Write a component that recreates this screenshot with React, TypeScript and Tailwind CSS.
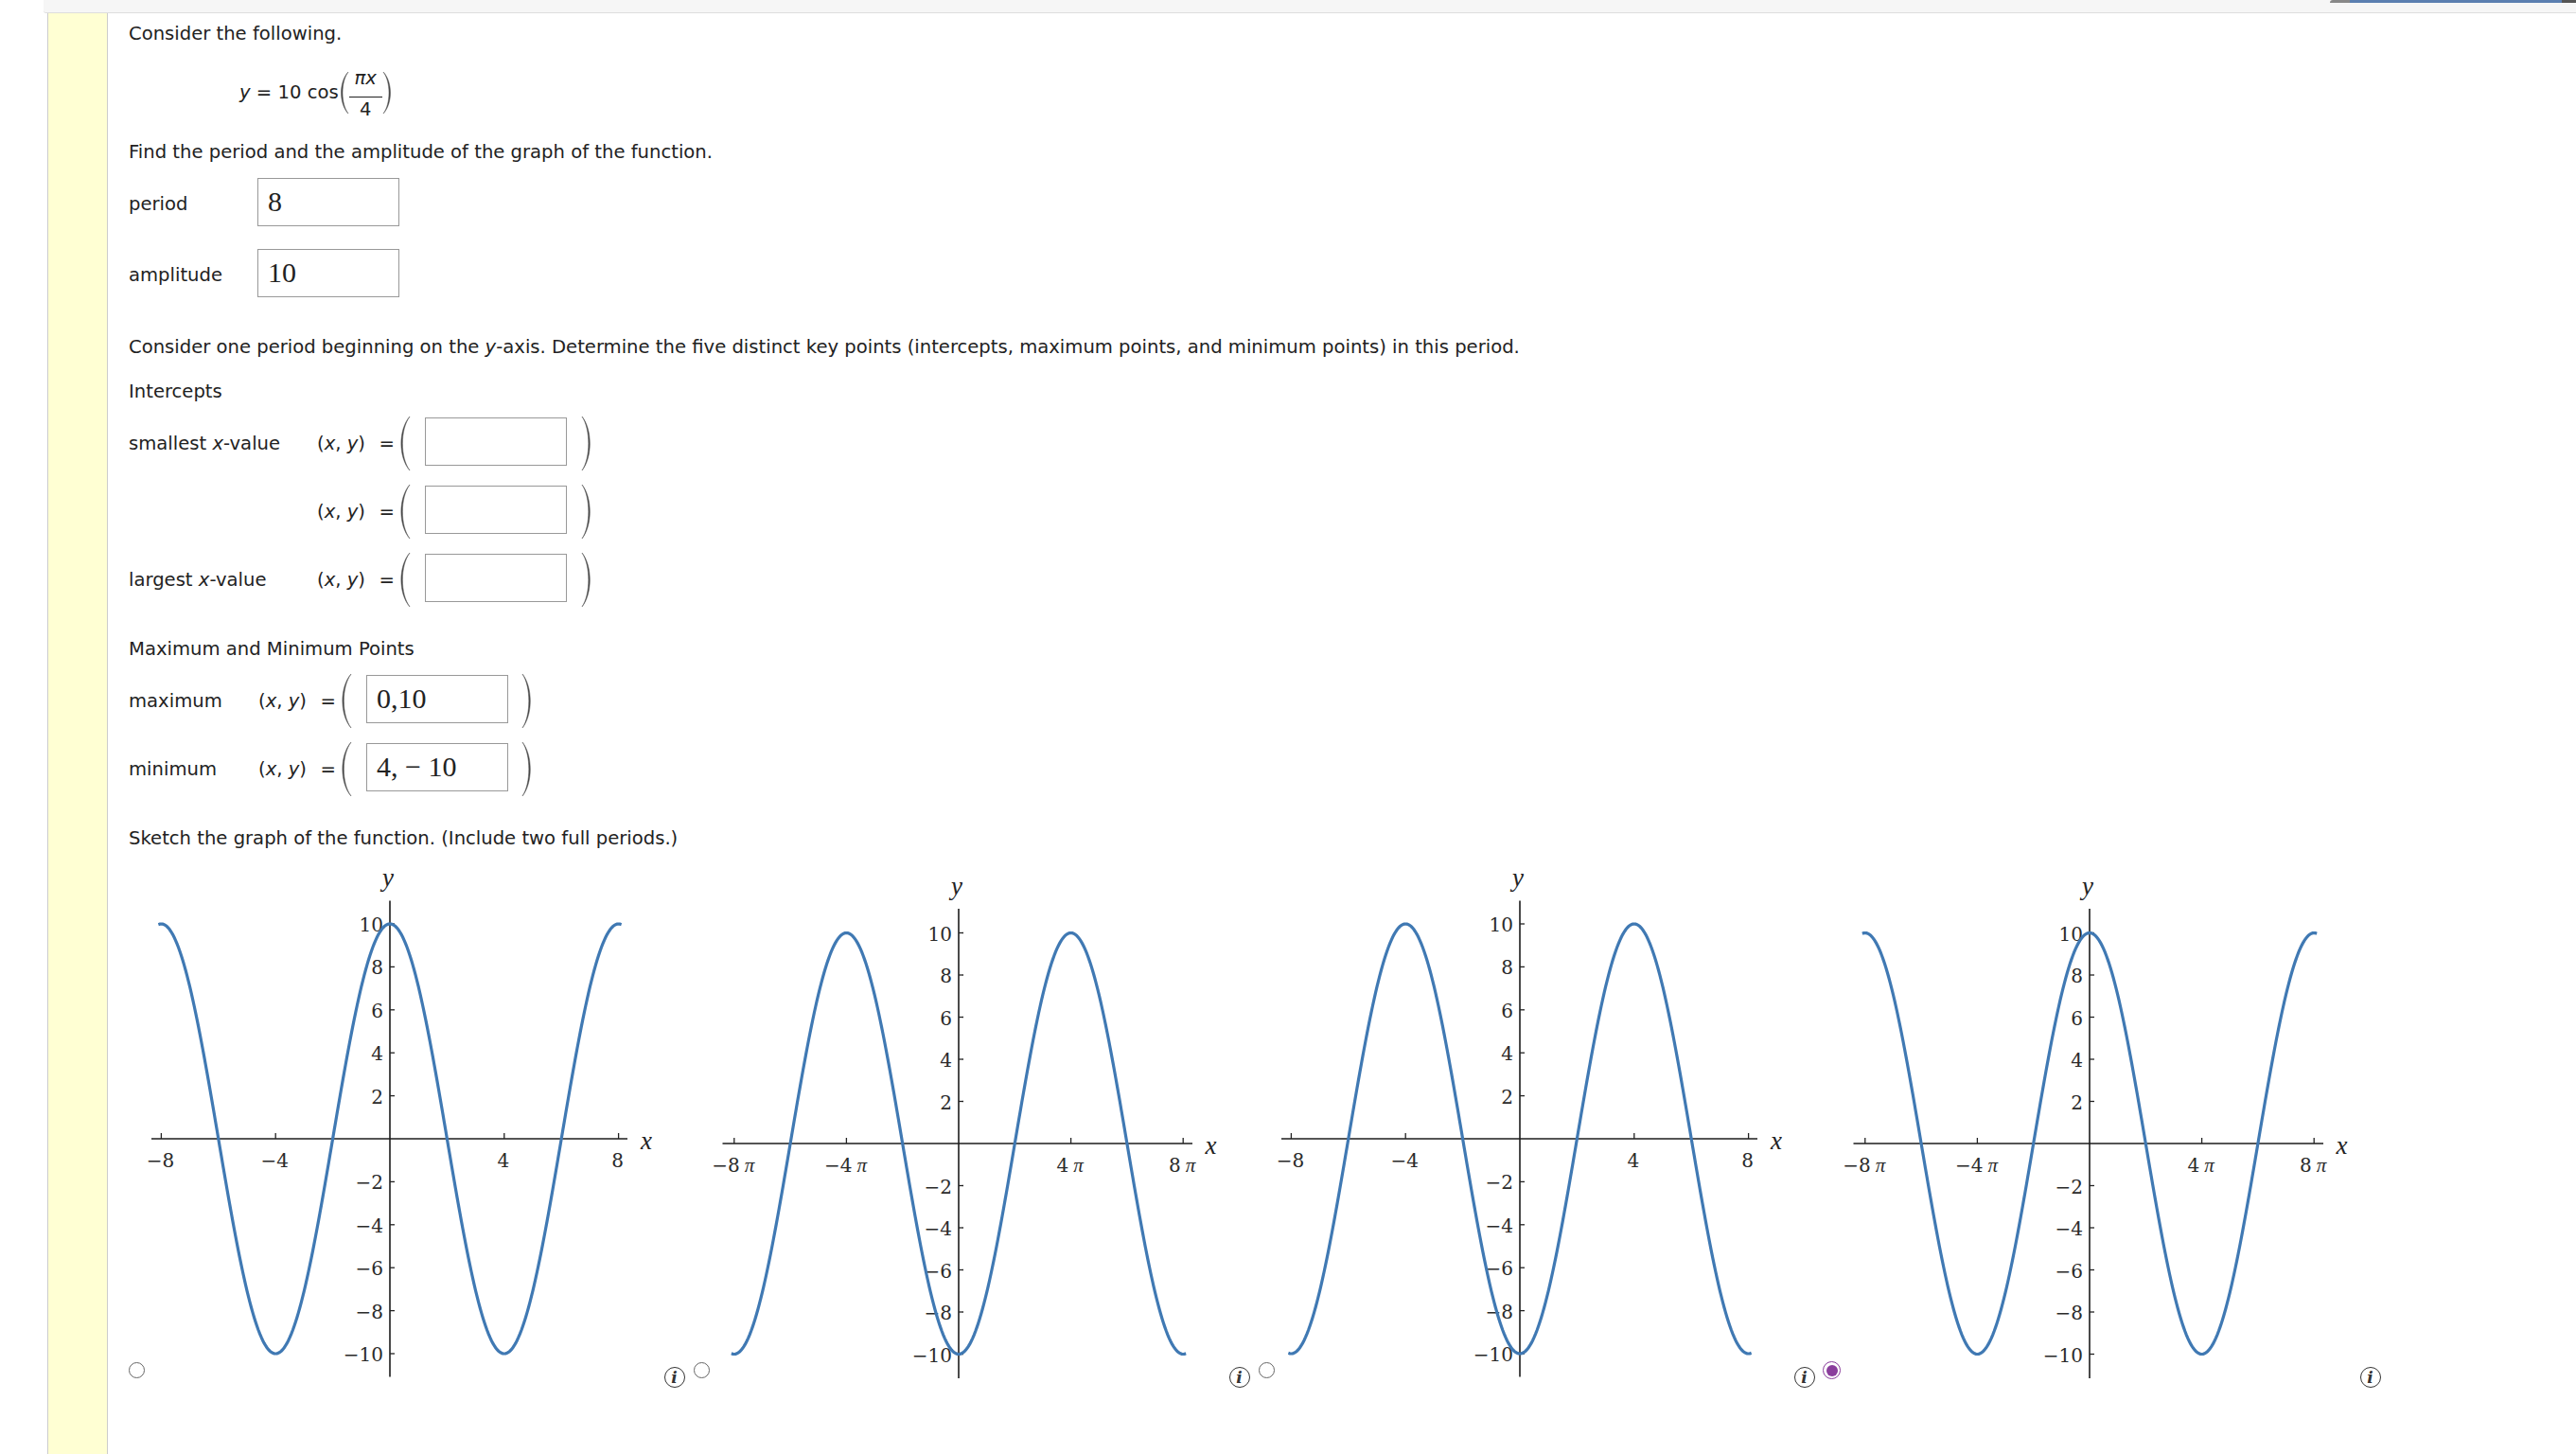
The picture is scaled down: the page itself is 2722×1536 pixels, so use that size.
import type { ReactNode } from 'react';

const sans = "font-['DejaVu_Sans',sans-serif]";
const serifStack = "'DejaVu Serif', serif";
const italicStack = "'Liberation Serif', serif";

function Paren({ flip = false, h = 57, w = 12 }: { flip?: boolean; h?: number; w?: number }) {
  const mid = w * -0.1;
  return (
    <svg
      width={w}
      height={h}
      viewBox={`0 0 ${w} ${h}`}
      className={`shrink-0 ${flip ? '-scale-x-100' : ''}`}
    >
      <path
        d={`M${w - 1} 0 C${mid} ${h * 0.24} ${mid} ${h * 0.76} ${w - 1} ${h} C${mid + 2} ${h * 0.76} ${mid + 2} ${h * 0.24} ${w - 1} 0 Z`}
        fill="#444"
        stroke="#555"
        strokeWidth="0.5"
      />
    </svg>
  );
}

function Answer({ value = '' }: { value?: string }) {
  return (
    <input
      readOnly
      value={value}
      className="w-[150px] h-[51px] shrink-0 border border-[#999] bg-white px-[10px] pb-[2px] text-[30px] text-[#222] font-['Liberation_Serif',serif] outline-none"
    />
  );
}

function Coord() {
  return (
    <span className="flex justify-between pr-[6px] w-full">
      <span>
        (<i>x</i>, <i>y</i>)
      </span>
      <span>=</span>
    </span>
  );
}

function PointRow({ label, value, wide }: { label?: ReactNode; value?: string; wide?: boolean }) {
  return (
    <div className="flex h-[51px] items-start">
      <span className={`${wide ? 'w-[199px]' : 'w-[137px]'} shrink-0 pt-[15px]`}>{label}</span>
      <span className="w-[88px] shrink-0 pt-[15px]">
        <Coord />
      </span>
      <span className="-mt-[1px] -ml-[1px] mr-[15px]">
        <Paren />
      </span>
      <Answer value={value} />
      <span className={`-mt-[1px] ${wide ? 'ml-[15px]' : 'ml-[14px]'}`}>
        <Paren flip w={11} />
      </span>
    </div>
  );
}

type GraphProps = {
  axisX: number;
  axisY: number;
  unitX: number;
  unitY: number;
  top: number;
  bottom: number;
  left: number;
  right: number;
  invert?: boolean;
  pi?: boolean;
  xLabel: number;
  yLabelY: number;
};

function Graph({ axisX, axisY, unitX, unitY, top, bottom, left, right, invert, pi, xLabel, yLabelY }: GraphProps) {
  const points: string[] = [];
  for (let i = 0; i <= 324; i++) {
    const x = -8.1 + i / 20;
    const y = (invert ? -10 : 10) * Math.cos((Math.PI * x) / 4);
    points.push(`${(axisX + x * unitX).toFixed(2)},${(axisY - y * unitY).toFixed(2)}`);
  }
  const labelStyle = { fontFamily: serifStack, fontSize: 20, fill: '#2b2b2b' };

  return (
    <svg width={545} height={565} viewBox="0 0 545 565" className="shrink-0">
      <line x1={axisX + left} x2={axisX + right} y1={axisY} y2={axisY} stroke="#1c1c1c" strokeWidth="1.6" />
      <line x1={axisX} x2={axisX} y1={top} y2={bottom} stroke="#1c1c1c" strokeWidth="1.6" />
      {[-8, -4, 4, 8].map((t) => (
        <g key={t}>
          <line
            x1={axisX + t * unitX}
            x2={axisX + t * unitX}
            y1={axisY - 6}
            y2={axisY}
            stroke="#222"
            strokeWidth="1.3"
          />
          <text
            x={axisX + t * unitX - 1}
            y={axisY + 23}
            textAnchor="middle"
            dominantBaseline="central"
            style={labelStyle}
          >
            {t < 0 ? `\u2212${-t}` : t}
            {pi && (
              <tspan dx="5" style={{ fontFamily: italicStack, fontStyle: 'italic', fontSize: 21 }}>
                π
              </tspan>
            )}
          </text>
        </g>
      ))}
      {[-10, -8, -6, -4, -2, 2, 4, 6, 8, 10].map((t) => (
        <g key={t}>
          <line
            x1={axisX}
            x2={axisX + 5}
            y1={axisY - t * unitY}
            y2={axisY - t * unitY}
            stroke="#222"
            strokeWidth="1.3"
          />
          <text
            x={axisX - 7}
            y={axisY - t * unitY + 1}
            textAnchor="end"
            dominantBaseline="central"
            style={labelStyle}
          >
            {t < 0 ? `\u2212${-t}` : t}
          </text>
        </g>
      ))}
      <polyline points={points.join(' ')} fill="none" stroke="#4079b3" strokeWidth="3.2" />
      <text
        x={axisX + xLabel}
        y={axisY + 2}
        textAnchor="middle"
        dominantBaseline="central"
        style={{ fontFamily: italicStack, fontStyle: 'italic', fontSize: 27, fill: '#222' }}
      >
        x
      </text>
      <text
        x={axisX - 2}
        y={yLabelY}
        textAnchor="middle"
        dominantBaseline="central"
        style={{ fontFamily: italicStack, fontStyle: 'italic', fontSize: 27, fill: '#222' }}
      >
        y
      </text>
    </svg>
  );
}

const cosShape = {
  axisX: 257,
  axisY: 298,
  unitX: 30.2,
  unitY: 22.7,
  top: 46.5,
  bottom: 549.5,
  left: -252,
  right: 251,
  xLabel: 271,
  yLabelY: 22,
};

const piShape = {
  axisX: 261,
  axisY: 303,
  unitX: 29.65,
  unitY: 22.25,
  top: 55,
  bottom: 551,
  left: -249.5,
  right: 247,
  xLabel: 266.5,
  yLabelY: 31,
};

function Radio({ selected }: { selected?: boolean }) {
  if (selected) {
    return (
      <span className="w-[19px] h-[19px] -ml-[1px] mb-[13px] shrink-0 rounded-full border-[1.5px] border-[#8a3d9c] flex items-center justify-center bg-white">
        <span className="w-[12px] h-[12px] rounded-full bg-[#8a3d9c]" />
      </span>
    );
  }
  return <span className="w-[17px] h-[17px] mb-[14px] shrink-0 rounded-full border border-[#666] bg-white" />;
}

function InfoIcon() {
  return (
    <span className="w-[22px] h-[22px] ml-[2px] mb-[4px] shrink-0 rounded-full border border-[#333] flex items-center justify-center text-[17px] leading-none italic font-bold text-[#333] font-['DejaVu_Serif',serif]">
      i
    </span>
  );
}

function Option({ children, selected }: { children: ReactNode; selected?: boolean }) {
  return (
    <div className="flex w-[597px] shrink-0 items-end">
      <Radio selected={selected} />
      <span className="w-[1.5px] shrink-0" />
      {children}
      <InfoIcon />
    </div>
  );
}

export default function App() {
  return (
    <div className={`h-[1536px] overflow-hidden bg-white text-[#222] text-[19.6px] leading-[26px] ${sans}`}>
      {/* Top toolbar edge */}
      <div className="ml-[46px] h-[14px] flex items-start justify-end bg-[#f6f6f6] border-b border-[#ddd] rounded-bl-[3px]">
        <span className="w-[21px] h-[3px] bg-[#888] rounded-tl-[4px]" />
        <span className="w-[224px] h-[3px] bg-[#5b7fb0]" />
        <span className="w-[15px] h-[3px] bg-[#555]" />
      </div>

      <div className="flex h-[1522px]">
        {/* Yellow marker column */}
        <div className="ml-[50px] w-[64px] shrink-0 bg-[#ffffd3] border-x border-[#ccc]" />

        <div className="pl-[22px] pt-[9px] flex flex-col">
          <p>Consider the following.</p>

          <div className="mt-[27px] ml-[117px] h-[44px] flex items-center">
            <span className="mr-[1px]">
              <i>y</i> = 10 cos
            </span>
            <Paren h={44} w={10} />
            <span className="w-[35px] mt-[4px] flex flex-col items-center">
              <i className="border-b border-[#222] w-full text-center pb-[7px] leading-[24px]">πx</i>
              <span className="leading-[26px]">4</span>
            </span>
            <Paren h={44} w={10} flip />
          </div>

          <p className="mt-[28px]">Find the period and the amplitude of the graph of the function.</p>

          <div className="mt-[14px] flex items-center">
            <span className="w-[136px] pt-[5px]">period</span>
            <Answer value="8" />
          </div>
          <div className="mt-[24px] flex items-center">
            <span className="w-[136px] pt-[5px]">amplitude</span>
            <Answer value="10" />
          </div>

          <p className="mt-[40px] whitespace-nowrap">
            Consider one period beginning on the <i>y</i>-axis. Determine the five distinct key points (intercepts,
            maximum points, and minimum points) in this period.
          </p>
          <p className="mt-[21px]">Intercepts</p>

          <div className="mt-[14px] flex flex-col gap-[21px]">
            <PointRow
              wide
              label={
                <>
                  smallest <i>x</i>-value
                </>
              }
            />
            <PointRow wide />
            <PointRow
              wide
              label={
                <>
                  largest <i>x</i>-value
                </>
              }
            />
          </div>

          <p className="mt-[37px]">Maximum and Minimum Points</p>

          <div className="mt-[14px] flex flex-col gap-[21px]">
            <PointRow label="maximum" value="0,10" />
            <PointRow label="minimum" value="4, − 10" />
          </div>

          <p className="mt-[37px]">Sketch the graph of the function. (Include two full periods.)</p>

          <div className="mt-[6px] flex">
            <Option>
              <Graph {...cosShape} />
            </Option>
            <Option>
              <Graph {...piShape} invert pi />
            </Option>
            <Option>
              <Graph {...cosShape} invert />
            </Option>
            <Option selected>
              <Graph {...piShape} pi />
            </Option>
          </div>
        </div>
      </div>
    </div>
  );
}
